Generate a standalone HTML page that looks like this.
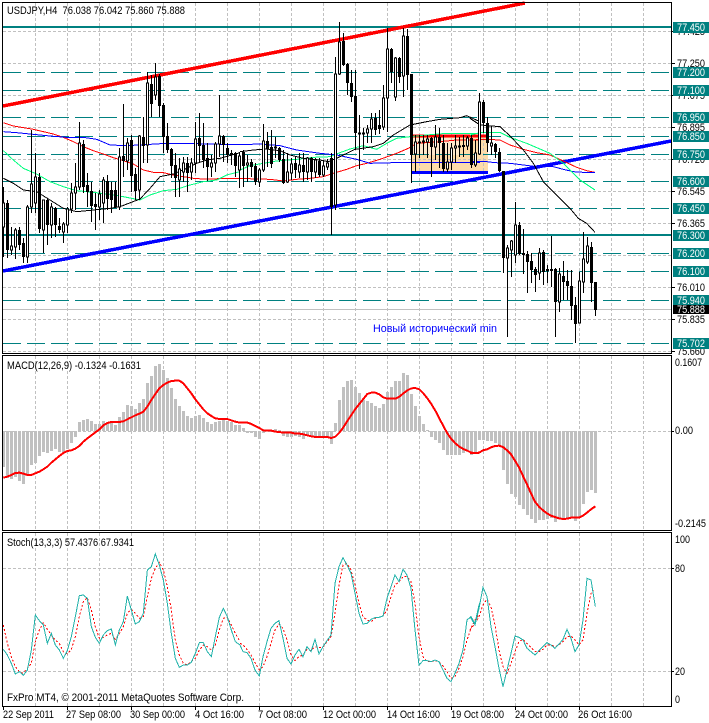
<!DOCTYPE html>
<html lang="ru"><head><meta charset="utf-8"><title>USDJPY,H4</title>
<style>
html,body{margin:0;padding:0;background:#fff;width:709px;height:723px;overflow:hidden}
svg{display:block}
polyline{shape-rendering:crispEdges}
text{font-family:"Liberation Sans",sans-serif;font-size:11px;fill:#000}
.w{fill:#fff}
</style></head><body>
<svg xmlns="http://www.w3.org/2000/svg" width="709" height="723" viewBox="0 0 709 723">
<rect width="709" height="723" fill="#fff"/>
<!-- fill rect -->
<rect x="412" y="136" width="76" height="36" fill="#fddcaa" shape-rendering="crispEdges"/>
<rect x="412" y="138" width="48" height="17" fill="#fde8cc" shape-rendering="crispEdges"/>
<!-- grid -->
<g fill="none" stroke="#c0c0c0" stroke-dasharray="3 2" shape-rendering="crispEdges">
<path d="M35.5 3V353M67.5 3V353M99.5 3V353M131.5 3V353M163.5 3V353M195.5 3V353M227.5 3V353M259.5 3V353M291.5 3V353M323.5 3V353M355.5 3V353M387.5 3V353M419.5 3V353M451.5 3V353M483.5 3V353M515.5 3V353M547.5 3V353M579.5 3V353M611.5 3V353M643.5 3V353"/>
<path d="M35.5 356V530M67.5 356V530M99.5 356V530M131.5 356V530M163.5 356V530M195.5 356V530M227.5 356V530M259.5 356V530M291.5 356V530M323.5 356V530M355.5 356V530M387.5 356V530M419.5 356V530M451.5 356V530M483.5 356V530M515.5 356V530M547.5 356V530M579.5 356V530M611.5 356V530M643.5 356V530"/>
<path d="M35.5 533V706M67.5 533V706M99.5 533V706M131.5 533V706M163.5 533V706M195.5 533V706M227.5 533V706M259.5 533V706M291.5 533V706M323.5 533V706M355.5 533V706M387.5 533V706M419.5 533V706M451.5 533V706M483.5 533V706M515.5 533V706M547.5 533V706M579.5 533V706M611.5 533V706M643.5 533V706"/>
<path d="M3 31.5H671M3 63.5H671M3 95.5H671M3 127.5H671M3 159.5H671M3 191.5H671M3 223.5H671M3 255.5H671M3 287.5H671M3 319.5H671M3 351.5H671M3 431.5H671M3 568.5H671M3 671.5H671"/>
</g>
<!-- teal levels -->
<g fill="none" stroke="#008080" shape-rendering="crispEdges">
<path stroke-width="2" d="M3 27H672M3 235H672"/>
<path stroke-dasharray="18 6" d="M3 72.5H671M3 90.5H671M3 117.5H671M3 136.5H671M3 154.5H671M3 181.5H671M3 208.5H671M3 253.5H671M3 271.5H671M3 300.5H671M3 343.5H671"/>
</g>
<path d="M3 309.5H672" stroke="#c0c0c0" fill="none" shape-rendering="crispEdges"/>
<!-- trend lines -->
<g fill="none" shape-rendering="crispEdges">
<path d="M3 106L525 3" stroke="#f00" stroke-width="3.5"/>
<path d="M3 271L671 141" stroke="#00f" stroke-width="3.5"/>
<path d="M412 136H488" stroke="#f00" stroke-width="3"/>
<path d="M411 172.5H488" stroke="#00f" stroke-width="3"/>
</g>
<!-- moving averages -->
<g fill="none" stroke-width="3" stroke-linejoin="round">
<g transform="scale(.33333)" stroke="#f00"><polyline points="10,368 40,378 70,383 100,388 130,395 160,402 190,412 220,425 250,440 280,452 310,462 340,473 370,482 400,492 430,510 460,517 490,518 520,525 550,530 580,535 610,537 640,537 670,535 720,535"/></g>
<g transform="translate(240 0) scale(.33333)" stroke="#f00"><polyline points="0,535 50,537 90,538 130,543 170,538 210,535 250,530 280,520 320,508 350,497 380,490 420,478 470,460 505,445 530,430 600,425 650,420 720,420"/></g>
<g transform="translate(470 0) scale(.33333)" stroke="#f00"><polyline points="0,420 50,418 90,420 120,435 160,448 200,458 240,465 280,483 320,502 350,512 375,517"/></g>
<g transform="scale(.33333)" stroke="#00f"><polyline points="10,395 50,398 100,403 150,408 200,412 250,412 290,418 330,435 380,437 450,433 500,430 570,430 620,432 720,434"/></g>
<g transform="translate(240 0) scale(.33333)" stroke="#00f"><polyline points="0,434 60,432 120,437 170,450 240,460 290,465 350,478 390,490 460,488 520,487 600,487 720,487"/></g>
<g transform="translate(470 0) scale(.33333)" stroke="#00f"><polyline points="0,485 50,485 75,488 120,490 160,495 200,500 250,500 280,508 310,515 340,517 375,517"/></g>
<g transform="scale(.33333)" stroke="#00ff7f"><polyline points="10,452 40,480 70,505 110,522 150,545 190,560 230,572 280,577 330,583 370,590 420,600 450,585 490,572 530,568 570,555 610,545 650,540 680,525 720,515"/></g>
<g transform="translate(240 0) scale(.33333)" stroke="#00ff7f"><polyline points="0,510 30,497 70,490 110,483 170,478 220,472 270,470 300,458 330,447 370,437 410,448 440,430 470,415 510,410 560,405 620,400 720,400"/></g>
<g transform="translate(470 0) scale(.33333)" stroke="#00ff7f"><polyline points="0,405 30,398 90,397 120,412 170,430 240,460 280,490 330,540 375,570"/></g>
<g transform="scale(.33333)" stroke="#000"><polyline points="10,535 40,550 70,570 110,575 150,600 190,625 230,635 280,630 330,625 360,620 420,597 450,565 480,530 520,522 560,505 590,490 620,480 660,475 720,458"/></g>
<g transform="translate(240 0) scale(.33333)" stroke="#000"><polyline points="0,455 40,450 80,447 120,452 150,465 190,475 240,480 265,485 290,475 310,465 345,448 400,440 430,430 460,405 510,375 560,365 600,358 660,353 680,347 720,365"/></g>
<g transform="translate(470 0) scale(.33333)" stroke="#000"><polyline points="0,355 30,375 90,380 120,408 160,450 190,490 220,545 260,585 300,625 325,655 350,670 375,697"/></g>
</g>
<!-- candle wicks -->
<path fill="none" stroke="#000" shape-rendering="crispEdges" d="M3.5 187V257M7.5 200V258M11.5 227V255M15.5 228V259M19.5 227V250M23.5 238V263M27.5 205V263M31.5 130V213M35.5 153V213M39.5 173V233M43.5 200V253M47.5 198V245M51.5 203V238M55.5 207V237M59.5 218V233M63.5 222V243M67.5 207V233M71.5 183V213M75.5 163V210M79.5 122V190M83.5 140V193M87.5 173V207M91.5 182V222M95.5 193V230M99.5 190V220M103.5 177V223M107.5 175V210M111.5 182V213M115.5 182V207M119.5 148V210M123.5 104V177M127.5 138V170M131.5 135V192M135.5 168V200M139.5 135V200M143.5 117V163M147.5 72V163M151.5 75V117M155.5 63V100M159.5 74V117M163.5 103V153M167.5 123V153M171.5 148V178M175.5 153V197M179.5 158V197M183.5 157V182M187.5 157V192M191.5 158V180M195.5 122V173M199.5 113V163M203.5 123V168M207.5 143V181M211.5 155V177M215.5 142V172M219.5 95V157M223.5 135V162M227.5 143V163M231.5 150V165M235.5 152V177M239.5 152V188M243.5 150V187M247.5 155V182M251.5 159V177M255.5 163V185M259.5 168V187M263.5 124V172M267.5 132V167M271.5 130V168M275.5 137V158M279.5 147V162M283.5 150V184M287.5 153V183M291.5 158V180M295.5 157V178M299.5 153V178M303.5 153V182M307.5 157V180M311.5 157V182M315.5 158V178M319.5 158V177M323.5 160V177M327.5 159V170M331.5 153V235M335.5 57V210M339.5 22V75M343.5 33V66M347.5 63V95M351.5 70V102M355.5 70V150M359.5 115V169M363.5 128V150M367.5 125V143M371.5 113V143M375.5 113V135M379.5 110V134M383.5 85V130M387.5 28V132M391.5 48V83M395.5 57V101M399.5 57V83M403.5 28V97M407.5 29V90M411.5 74V183M415.5 135V172M419.5 135V158M423.5 135V155M427.5 135V158M431.5 137V177M435.5 125V160M439.5 128V168M443.5 135V172M447.5 143V172M451.5 143V170M455.5 135V163M459.5 137V157M463.5 135V157M467.5 136V150M471.5 135V168M475.5 140V167M479.5 93V155M483.5 100V133M487.5 117V152M491.5 126V155M495.5 143V158M499.5 148V172M503.5 171V273M507.5 245V337M511.5 240V277M515.5 202V263M519.5 222V255M523.5 229V274M527.5 251V293M531.5 253V283M535.5 267V292M539.5 248V280M543.5 250V285M547.5 265V283M551.5 236V287M555.5 268V337M559.5 268V312M563.5 261V300M567.5 270V300M571.5 270V320M575.5 297V343M579.5 272V323M583.5 232V293M587.5 237V264M591.5 242V302M595.5 282V316"/>
<!-- black bodies -->
<path fill="#000" shape-rendering="crispEdges" d="M6 203h3v47h-3zM18 230h3v15h-3zM22 243h3v14h-3zM38 177h3v52h-3zM46 200h3v25h-3zM54 208h3v17h-3zM58 226h3v4h-3zM82 144h3v43h-3zM86 185h3v7h-3zM90 191h3v15h-3zM94 204h3v3h-3zM106 181h3v18h-3zM110 190h3v10h-3zM114 190h3v17h-3zM122 156h3v5h-3zM130 140h3v36h-3zM134 174h3v17h-3zM142 137h3v9h-3zM150 84h3v20h-3zM158 76h3v30h-3zM162 105h3v32h-3zM166 136h3v14h-3zM170 149h3v17h-3zM174 165h3v13h-3zM186 163h3v10h-3zM198 138h3v8h-3zM202 145h3v15h-3zM206 158h3v9h-3zM222 136h3v9h-3zM226 148h3v7h-3zM230 153h3v2h-3zM234 153h3v13h-3zM242 152h3v14h-3zM250 162h3v5h-3zM254 166h3v16h-3zM266 141h3v8h-3zM270 147h3v17h-3zM278 148h3v12h-3zM282 159h3v24h-3zM294 163h3v7h-3zM302 165h3v7h-3zM310 158h3v14h-3zM318 161h3v14h-3zM330 158h3v49h-3zM342 41h3v24h-3zM346 64h3v19h-3zM350 83h3v14h-3zM354 96h3v37h-3zM374 118h3v12h-3zM378 125h3v4h-3zM390 49h3v23h-3zM398 58h3v19h-3zM406 36h3v39h-3zM410 74h3v81h-3zM430 138h3v9h-3zM438 137h3v6h-3zM442 143h3v26h-3zM462 145h3v2h-3zM470 138h3v27h-3zM482 102h3v21h-3zM486 123h3v20h-3zM494 144h3v8h-3zM498 152h3v19h-3zM502 171h3v87h-3zM518 225h3v29h-3zM522 253h3v2h-3zM526 254h3v8h-3zM530 261h3v9h-3zM534 269h3v6h-3zM542 252h3v20h-3zM546 269h3v2h-3zM550 269h3v2h-3zM554 269h3v33h-3zM562 276h3v6h-3zM566 281h3v5h-3zM570 286h3v20h-3zM574 305h3v19h-3zM590 247h3v36h-3zM594 282h3v28h-3z"/>
<!-- white bodies -->
<path fill="#fff" stroke="#000" shape-rendering="crispEdges" d="M2.5 203h2v24h-2zM10.5 246h2v4h-2zM14.5 230h2v17h-2zM26.5 207h2v50h-2zM30.5 184h2v23h-2zM34.5 177h2v26h-2zM42.5 200h2v30h-2zM50.5 207h2v18h-2zM62.5 224h2v8h-2zM66.5 209h2v16h-2zM70.5 193h2v16h-2zM74.5 187h2v6h-2zM78.5 143h2v44h-2zM98.5 194h2v13h-2zM102.5 180h2v23h-2zM118.5 157h2v50h-2zM126.5 143h2v18h-2zM138.5 136h2v54h-2zM146.5 83h2v62h-2zM154.5 77h2v18h-2zM178.5 169h2v11h-2zM182.5 163h2v9h-2zM190.5 163h2v9h-2zM194.5 139h2v24h-2zM210.5 163h2v4h-2zM214.5 144h2v19h-2zM218.5 136h2v8h-2zM238.5 156h2v14h-2zM246.5 163h2v2h-2zM258.5 170h2v12h-2zM262.5 141h2v29h-2zM274.5 147h2v1h-2zM286.5 172h2v10h-2zM290.5 164h2v9h-2zM298.5 165h2v7h-2zM306.5 158h2v14h-2zM314.5 160h2v12h-2zM322.5 166h2v9h-2zM326.5 163h2v4h-2zM334.5 74h2v131h-2zM338.5 42h2v32h-2zM358.5 133h2v1h-2zM362.5 133h2v1h-2zM366.5 129h2v4h-2zM370.5 119h2v10h-2zM382.5 98h2v29h-2zM386.5 49h2v49h-2zM394.5 58h2v39h-2zM402.5 36h2v40h-2zM414.5 142h2v12h-2zM418.5 142h2v1h-2zM422.5 141h2v1h-2zM426.5 139h2v3h-2zM434.5 137h2v10h-2zM446.5 162h2v7h-2zM450.5 148h2v14h-2zM454.5 146h2v2h-2zM458.5 146h2v1h-2zM466.5 138h2v8h-2zM474.5 153h2v12h-2zM478.5 102h2v52h-2zM490.5 143h2v3h-2zM506.5 248h2v10h-2zM510.5 241h2v9h-2zM514.5 225h2v30h-2zM538.5 253h2v20h-2zM558.5 274h2v28h-2zM578.5 281h2v42h-2zM582.5 259h2v23h-2zM586.5 246h2v16h-2z"/>
<!-- MACD histogram -->
<path fill="none" stroke="#c0c0c0" stroke-width="3" shape-rendering="crispEdges" d="M3.5 431V467M7.5 431V478M11.5 431V479M15.5 431V477M19.5 431V481M23.5 431V484M27.5 431V475M31.5 431V465M35.5 431V463M39.5 431V456M43.5 431V452M47.5 431V453M51.5 431V451M55.5 431V449M59.5 431V452M63.5 431V452M67.5 431V449M71.5 431V443M75.5 431V437M79.5 431V422M83.5 431V420M87.5 431V419M91.5 431V421M95.5 431V424M99.5 431V424M103.5 431V421M107.5 431V423M111.5 431V422M115.5 431V425M119.5 431V417M123.5 431V412M127.5 431V405M131.5 431V406M135.5 431V409M139.5 431V403M143.5 431V399M147.5 431V383M151.5 431V376M155.5 431V366M159.5 431V364M163.5 431V370M167.5 431V378M171.5 431V388M175.5 431V399M179.5 431V406M183.5 431V411M187.5 431V416M191.5 431V418M195.5 431V416M199.5 431V415M203.5 431V418M207.5 431V422M211.5 431V424M215.5 431V422M219.5 431V421M223.5 431V420M227.5 431V421M231.5 431V422M235.5 431V425M239.5 431V425M243.5 431V428M247.5 431V433M251.5 431V433M255.5 431V437M259.5 431V439M263.5 431V433M271.5 431V432M275.5 431V429M279.5 431V430M283.5 431V436M287.5 431V437M291.5 431V437M295.5 431V436M299.5 431V437M303.5 431V439M307.5 431V436M311.5 431V436M315.5 431V436M319.5 431V436M323.5 431V436M327.5 431V437M331.5 431V444M335.5 431V423M339.5 431V400M343.5 431V387M347.5 431V381M351.5 431V380M355.5 431V387M359.5 431V393M363.5 431V400M367.5 431V401M371.5 431V403M375.5 431V406M379.5 431V408M383.5 431V404M387.5 431V392M391.5 431V387M395.5 431V381M399.5 431V381M403.5 431V373M407.5 431V375M411.5 431V394M415.5 431V406M419.5 431V416M423.5 431V424M427.5 431V430M431.5 431V437M435.5 431V440M439.5 431V443M443.5 431V450M447.5 431V455M451.5 431V455M455.5 431V455M459.5 431V455M463.5 431V453M467.5 431V450M471.5 431V455M475.5 431V454M479.5 431V440M483.5 431V440M487.5 431V441M491.5 431V441M495.5 431V443M499.5 431V445M503.5 431V470M507.5 431V484M511.5 431V494M515.5 431V497M519.5 431V505M523.5 431V509M527.5 431V515M531.5 431V519M535.5 431V523M539.5 431V520M543.5 431V520M547.5 431V519M551.5 431V518M555.5 431V522M559.5 431V519M563.5 431V519M567.5 431V518M571.5 431V518M575.5 431V521M579.5 431V518M583.5 431V504M587.5 431V492M591.5 431V490M595.5 431V493"/>
<!-- MACD signal -->
<g fill="none" stroke="#f00" stroke-width="6" stroke-linejoin="round">
<g transform="translate(0 350) scale(.33333)"><polyline points="10,383 22,380 34,375 46,369 58,368 70,371 82,375 94,375 106,370 118,365 130,358 142,350 154,338 166,328 178,318 190,309 202,303 214,301 226,296 238,288 250,275 262,265 274,256 286,247 298,238 310,226 322,219 334,216 346,216 358,216 370,214 382,208 394,202 406,196 418,191 430,185 442,170 454,150 466,132 478,115 490,105 502,98 514,93 526,92 538,92 550,100 562,115 574,130 586,148 598,163 610,178 622,190 634,198 646,205 658,207 670,207 682,207 694,211 706,215 720,218"/></g>
<g transform="translate(240 350) scale(.33333)"><polyline points="0,218 10,218 22,218 34,222 46,228 58,234 70,241 82,242 94,242 106,245 118,246 130,248 142,248 154,248 166,251 178,251 190,253 202,256 214,259 226,261 238,261 250,261 262,261 274,264 286,260 298,248 310,232 322,213 334,195 346,177 358,162 370,147 382,132 394,128 406,128 418,133 430,142 442,146 454,146 466,146 478,140 490,130 502,121 514,115 526,114 538,118 550,130 562,145 574,162 586,182 598,205 610,228 622,250 634,267 646,280 658,290 670,297 682,302 694,308 706,309 720,308"/></g>
<g transform="translate(470 350) scale(.33333)"><polyline points="0,309 15,309 27,308 39,301 51,298 63,292 75,288 87,287 99,291 111,301 123,313 135,332 147,352 159,378 171,403 183,430 195,455 207,470 219,481 231,490 243,497 255,501 267,505 279,507 291,506 303,503 315,503 327,503 339,497 351,488 363,478 376,469"/></g>
</g>
<!-- Stochastic -->
<g fill="none" stroke-width="3">
<g stroke="#f00" stroke-dasharray="6 6">
<g transform="translate(0 530) scale(.33333)"><polyline points="10,285 22,340 34,380 46,410 58,425 70,430 82,415 94,400 106,335 118,300 130,278 142,298 154,315 166,330 178,340 190,365 202,372 214,358 226,320 238,260 250,215 262,203 274,240 286,290 298,325 310,322 322,315 334,310 346,328 358,310 370,290 382,250 394,238 406,250 418,265 430,260 442,200 454,145 466,115 478,97 490,120 502,170 514,240 526,330 538,375 550,400 562,405 574,395 586,385 598,360 610,345 622,350 634,360 646,345 658,300 670,265 682,262 694,285 706,310 720,335"/></g>
<g transform="translate(240 530) scale(.33333)"><polyline points="0,340 9,345 21,358 33,375 45,398 58,420 69,410 81,380 93,340 105,300 117,282 129,295 141,330 153,375 165,392 177,380 189,375 201,358 213,362 225,350 237,352 249,352 261,335 273,320 285,250 297,165 309,105 321,100 333,120 345,165 357,220 369,260 381,270 393,275 405,265 417,262 429,258 441,240 453,200 465,165 477,155 489,140 501,140 513,155 525,220 537,320 549,380 561,395 573,395 585,392 597,395 609,408 621,425 633,445 645,440 657,415 669,380 681,330 693,295 705,270 717,255"/></g>
<g transform="translate(470 530) scale(.33333)"><polyline points="0,300 15,280 27,260 39,225 51,208 63,230 75,285 87,360 99,410 111,430 123,400 135,365 147,335 159,328 171,340 183,352 195,365 207,365 219,358 231,345 243,345 255,350 267,345 279,335 291,320 303,318 315,330 327,345 339,330 351,250 363,190 370,180"/></g>
</g>
<g stroke="#20b2aa">
<g transform="translate(0 530) scale(.33333)"><polyline points="10,358 22,375 34,400 46,432 58,425 70,436 82,420 94,360 106,255 118,272 130,285 142,340 154,310 166,345 178,360 190,385 202,362 214,320 226,260 238,197 250,195 262,205 274,290 286,322 298,340 310,315 322,302 334,297 346,345 358,300 370,275 382,198 394,240 406,282 418,275 430,250 442,120 454,110 466,72 478,105 490,150 502,220 514,310 526,385 538,412 550,405 562,405 574,397 586,370 598,338 610,338 622,365 634,380 646,320 658,262 670,235 682,260 694,300 706,335 720,345"/></g>
<g transform="translate(240 530) scale(.33333)"><polyline points="0,345 9,365 21,368 33,385 45,420 58,438 69,380 81,335 93,295 105,280 117,272 129,325 141,385 153,402 165,375 177,358 189,380 201,350 213,365 225,328 237,372 249,350 261,332 273,315 285,160 297,110 309,83 321,105 333,130 345,190 357,250 369,282 381,280 393,268 405,263 417,262 429,258 441,205 453,170 465,135 477,155 489,118 501,135 513,175 525,300 537,405 549,392 561,392 573,395 585,390 597,395 609,420 621,445 633,455 645,430 657,400 669,360 681,270 693,260 705,280 717,225 720,218"/></g>
<g transform="translate(470 530) scale(.33333)"><polyline points="0,260 15,285 27,235 39,172 51,200 63,290 75,350 87,415 99,470 111,420 123,370 135,318 147,322 159,330 171,355 183,365 195,375 207,362 219,350 231,338 243,345 255,355 267,342 279,328 291,298 303,325 315,365 327,345 339,270 351,145 363,150 376,230"/></g>
</g>
</g>
<!-- frames -->
<g fill="none" stroke="#000" shape-rendering="crispEdges">
<rect x="2.5" y="2.5" width="669" height="351"/>
<rect x="2.5" y="355.5" width="669" height="175"/>
<rect x="2.5" y="532.5" width="669" height="174"/>
<path d="M671 31.5h4M671 63.5h4M671 95.5h4M671 127.5h4M671 159.5h4M671 191.5h4M671 223.5h4M671 287.5h4M671 319.5h4M671 351.5h4M671 431.5h3M671 568.5h3M671 671.5h3M3.5 706v4M67.5 706v4M131.5 706v4M195.5 706v4M259.5 706v4M323.5 706v4M387.5 706v4M451.5 706v4M515.5 706v4M579.5 706v4"/>
</g>
<!-- text -->
<text x="7" y="14" textLength="178" lengthAdjust="spacingAndGlyphs" xml:space="preserve">USDJPY,H4  76.038 76.042 75.860 75.888</text>
<text x="7" y="369" textLength="134" lengthAdjust="spacingAndGlyphs">MACD(12,26,9) -0.1324 -0.1631</text>
<text x="7" y="546" textLength="127" lengthAdjust="spacingAndGlyphs">Stoch(13,3,3) 57.4376 67.9341</text>
<text x="7" y="701" textLength="237" lengthAdjust="spacingAndGlyphs">FxPro MT4, © 2001-2011 MetaQuotes Software Corp.</text>
<text x="373" y="332" textLength="124" lengthAdjust="spacingAndGlyphs" style="fill:#0000ff">Новый исторический min</text>
<!-- axis labels -->
<g>
<text x="677" y="35" textLength="28" lengthAdjust="spacingAndGlyphs">77.425</text>
<text x="677" y="67" textLength="28" lengthAdjust="spacingAndGlyphs">77.250</text>
<text x="677" y="99" textLength="28" lengthAdjust="spacingAndGlyphs">77.075</text>
<text x="677" y="131" textLength="28" lengthAdjust="spacingAndGlyphs">76.895</text>
<text x="677" y="163" textLength="28" lengthAdjust="spacingAndGlyphs">76.720</text>
<text x="677" y="195" textLength="28" lengthAdjust="spacingAndGlyphs">76.545</text>
<text x="677" y="227" textLength="28" lengthAdjust="spacingAndGlyphs">76.365</text>
<text x="677" y="291" textLength="28" lengthAdjust="spacingAndGlyphs">76.010</text>
<text x="677" y="323" textLength="28" lengthAdjust="spacingAndGlyphs">75.835</text>
<text x="677" y="355" textLength="28" lengthAdjust="spacingAndGlyphs">75.660</text>
</g>
<g fill="#008080" shape-rendering="crispEdges">
<rect x="673" y="22" width="36" height="11"/><rect x="673" y="67" width="36" height="11"/><rect x="673" y="85" width="36" height="11"/><rect x="673" y="112" width="36" height="11"/><rect x="673" y="131" width="36" height="11"/><rect x="673" y="149" width="36" height="11"/><rect x="673" y="176" width="36" height="11"/><rect x="673" y="203" width="36" height="11"/><rect x="673" y="230" width="36" height="11"/><rect x="673" y="248" width="36" height="11"/><rect x="673" y="266" width="36" height="11"/><rect x="673" y="295" width="36" height="11"/><rect x="673" y="338" width="36" height="11"/>
</g>
<rect x="673" y="305" width="36" height="9" fill="#000" shape-rendering="crispEdges"/>
<g>
<text class="w" x="677" y="31" textLength="28" lengthAdjust="spacingAndGlyphs">77.450</text>
<text class="w" x="677" y="76" textLength="28" lengthAdjust="spacingAndGlyphs">77.200</text>
<text class="w" x="677" y="94" textLength="28" lengthAdjust="spacingAndGlyphs">77.100</text>
<text class="w" x="677" y="121" textLength="28" lengthAdjust="spacingAndGlyphs">76.950</text>
<text class="w" x="677" y="140" textLength="28" lengthAdjust="spacingAndGlyphs">76.850</text>
<text class="w" x="677" y="158" textLength="28" lengthAdjust="spacingAndGlyphs">76.750</text>
<text class="w" x="677" y="185" textLength="28" lengthAdjust="spacingAndGlyphs">76.600</text>
<text class="w" x="677" y="212" textLength="28" lengthAdjust="spacingAndGlyphs">76.450</text>
<text class="w" x="677" y="239" textLength="28" lengthAdjust="spacingAndGlyphs">76.300</text>
<text class="w" x="677" y="257" textLength="28" lengthAdjust="spacingAndGlyphs">76.200</text>
<text class="w" x="677" y="275" textLength="28" lengthAdjust="spacingAndGlyphs">76.100</text>
<text class="w" x="677" y="304" textLength="28" lengthAdjust="spacingAndGlyphs">75.940</text>
<text class="w" x="677" y="313" textLength="28" lengthAdjust="spacingAndGlyphs">75.888</text>
<text class="w" x="677" y="347" textLength="28" lengthAdjust="spacingAndGlyphs">75.702</text>
</g>
<text x="675" y="366" textLength="27" lengthAdjust="spacingAndGlyphs">0.1607</text>
<text x="675" y="434" textLength="18" lengthAdjust="spacingAndGlyphs">0.00</text>
<text x="675" y="527" textLength="31" lengthAdjust="spacingAndGlyphs">-0.2145</text>
<text x="675" y="543" textLength="15" lengthAdjust="spacingAndGlyphs">100</text>
<text x="675" y="572" textLength="10" lengthAdjust="spacingAndGlyphs">80</text>
<text x="675" y="675" textLength="10" lengthAdjust="spacingAndGlyphs">20</text>
<text x="675" y="703" textLength="5" lengthAdjust="spacingAndGlyphs">0</text>
<!-- date labels -->
<text x="3" y="718" textLength="51" lengthAdjust="spacingAndGlyphs">22 Sep 2011</text>
<text x="66" y="718" textLength="55" lengthAdjust="spacingAndGlyphs">27 Sep 08:00</text>
<text x="130" y="718" textLength="55" lengthAdjust="spacingAndGlyphs">30 Sep 00:00</text>
<text x="195" y="718" textLength="49" lengthAdjust="spacingAndGlyphs">4 Oct 16:00</text>
<text x="258" y="718" textLength="49" lengthAdjust="spacingAndGlyphs">7 Oct 08:00</text>
<text x="323" y="718" textLength="53" lengthAdjust="spacingAndGlyphs">12 Oct 00:00</text>
<text x="387" y="718" textLength="53" lengthAdjust="spacingAndGlyphs">14 Oct 16:00</text>
<text x="451" y="718" textLength="53" lengthAdjust="spacingAndGlyphs">19 Oct 08:00</text>
<text x="515" y="718" textLength="53" lengthAdjust="spacingAndGlyphs">24 Oct 00:00</text>
<text x="578" y="718" textLength="54" lengthAdjust="spacingAndGlyphs">26 Oct 16:00</text>
</svg>
</body></html>
